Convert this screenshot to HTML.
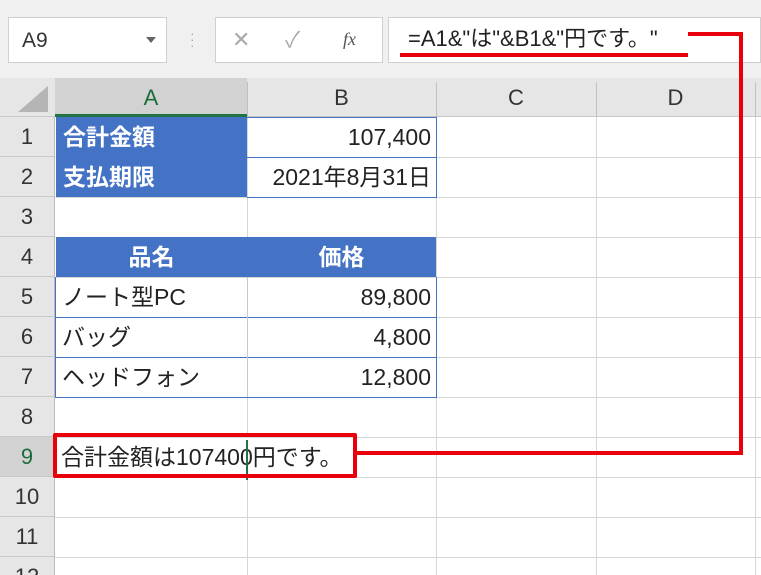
<!DOCTYPE html><html><head><meta charset="utf-8"><style>
*{margin:0;padding:0;box-sizing:border-box}
html,body{width:761px;height:575px;overflow:hidden}
body{background:#fff;position:relative;font-family:"Liberation Sans","Noto Sans CJK JP",sans-serif;color:#222}
div{position:absolute}
.t{font-size:23px;line-height:40px;white-space:nowrap}
.rh{left:0;width:55px;text-align:center;background:#e6e6e6;color:#333;font-size:22px;line-height:40px;border-bottom:1px solid #c8c8c8;border-right:1px solid #bbb}
.hl{left:55px;width:706px;height:1px;background:#d6d6d6}
.vl{width:1px;height:460px;background:#d6d6d6}
.blue{background:#4472c4;color:#fff;font-weight:bold}
</style></head><body>
<div style="left:0;top:0;width:761px;height:78px;background:#f0f0f0"></div>
<div style="left:8px;top:17px;width:159px;height:46px;background:#fff;border:1px solid #d0d0d0"></div>
<div class="t" style="left:22px;top:21px;font-size:21px;color:#333">A9</div>
<div style="left:146px;top:37px;width:0;height:0;border-left:5px solid transparent;border-right:5px solid transparent;border-top:6px solid #666"></div>
<div style="left:190px;top:30px;color:#aaa;font-size:14px;line-height:6px">·<br>·<br>·</div>
<div style="left:215px;top:17px;width:168px;height:46px;background:#fff;border:1px solid #d0d0d0"></div>
<div class="t" style="left:232px;top:20px;color:#aaa;font-size:22px">✕</div>
<div class="t" style="left:285px;top:20px;color:#aaa;font-size:22px">✓</div>
<div class="t" style="left:343px;top:19px;color:#555;font-size:18px;font-style:italic;font-family:'Liberation Serif',serif">fx</div>
<div style="left:388px;top:17px;width:373px;height:46px;background:#fff;border:1px solid #d0d0d0"></div>
<div class="t" style="left:408px;top:19px;color:#222;font-size:22px">=A1&amp;"は"&amp;B1&amp;"円です。"</div>
<div style="left:0;top:78px;width:761px;height:39px;background:#e6e6e6;border-bottom:1px solid #c8c8c8"></div>
<div style="left:18px;top:86px;width:0;height:0;border-left:30px solid transparent;border-bottom:26px solid #b5b5b5"></div>
<div style="left:55px;top:78px;width:192px;height:39px;background:#d2d2d2;border-bottom:3px solid #217346"></div>
<div class="t" style="left:55px;top:78px;width:192px;text-align:center;color:#1e6b3c;font-size:22px">A</div>
<div class="t" style="left:247px;top:78px;width:189px;text-align:center;color:#333;font-size:22px">B</div>
<div class="t" style="left:436px;top:78px;width:160px;text-align:center;color:#333;font-size:22px">C</div>
<div class="t" style="left:596px;top:78px;width:159px;text-align:center;color:#333;font-size:22px">D</div>
<div style="left:247px;top:82px;width:1px;height:35px;background:#c0c0c0"></div>
<div style="left:436px;top:82px;width:1px;height:35px;background:#c0c0c0"></div>
<div style="left:596px;top:82px;width:1px;height:35px;background:#c0c0c0"></div>
<div style="left:755px;top:82px;width:1px;height:35px;background:#c0c0c0"></div>
<div class="vl" style="left:247px;top:117px"></div><div class="vl" style="left:436px;top:117px"></div><div class="vl" style="left:596px;top:117px"></div><div class="vl" style="left:755px;top:117px"></div>
<div class="hl" style="top:157px"></div><div class="hl" style="top:197px"></div><div class="hl" style="top:237px"></div><div class="hl" style="top:277px"></div><div class="hl" style="top:317px"></div><div class="hl" style="top:357px"></div><div class="hl" style="top:397px"></div><div class="hl" style="top:437px"></div><div class="hl" style="top:477px"></div><div class="hl" style="top:517px"></div><div class="hl" style="top:557px"></div>
<div class="rh" style="top:117px;height:40px">1</div><div class="rh" style="top:157px;height:40px">2</div><div class="rh" style="top:197px;height:40px">3</div><div class="rh" style="top:237px;height:40px">4</div><div class="rh" style="top:277px;height:40px">5</div><div class="rh" style="top:317px;height:40px">6</div><div class="rh" style="top:357px;height:40px">7</div><div class="rh" style="top:397px;height:40px">8</div><div class="rh" style="top:437px;height:40px;background:#d2d2d2;color:#1e6b3c">9</div><div class="rh" style="top:477px;height:40px">10</div><div class="rh" style="top:517px;height:40px">11</div><div class="rh" style="top:557px;height:40px">12</div>
<div class="blue t" style="left:56px;top:117px;width:191px;height:80px;padding-left:7px;line-height:40px">合計金額<br>支払期限</div>
<div style="left:247px;top:117px;width:190px;height:81px;border:1px solid #4472c4;border-left:none"></div>
<div style="left:247px;top:157px;width:190px;height:1px;background:#4472c4"></div>
<div class="t" style="left:247px;top:117px;width:184px;text-align:right">107,400</div>
<div class="t" style="left:247px;top:157px;width:184px;text-align:right">2021年8月31日</div>
<div class="blue t" style="left:56px;top:237px;width:380px;height:40px"><span style="position:absolute;left:0;width:191px;text-align:center">品名</span><span style="position:absolute;left:191px;width:189px;text-align:center">価格</span></div>
<div style="left:55px;top:277px;width:382px;height:121px;border:1px solid #4472c4;border-top:none"></div>
<div style="left:55px;top:317px;width:382px;height:1px;background:#4472c4"></div>
<div style="left:55px;top:357px;width:382px;height:1px;background:#4472c4"></div>
<div style="left:247px;top:277px;width:1px;height:120px;background:#c8c8c8"></div>
<div class="t" style="left:62px;top:277px">ノート型PC</div>
<div class="t" style="left:62px;top:317px">バッグ</div>
<div class="t" style="left:62px;top:357px">ヘッドフォン</div>
<div class="t" style="left:247px;top:277px;width:184px;text-align:right">89,800</div>
<div class="t" style="left:247px;top:317px;width:184px;text-align:right">4,800</div>
<div class="t" style="left:247px;top:357px;width:184px;text-align:right">12,800</div>
<div style="left:56px;top:438px;width:300px;height:39px;background:#fff"></div>
<div class="t" style="left:61px;top:437px">合計金額は107400円です。</div>
<div style="left:246px;top:440px;width:2px;height:40px;background:#217346"></div>
<div style="left:53px;top:433px;width:304px;height:45px;border:4px solid #e8000b;border-radius:2px"></div>
<div style="left:400px;top:53px;width:288px;height:4px;background:#e8000b"></div>
<div style="left:688px;top:32px;width:55px;height:4px;background:#e8000b"></div>
<div style="left:739px;top:32px;width:4px;height:423px;background:#e8000b"></div>
<div style="left:355px;top:451px;width:388px;height:4px;background:#e8000b"></div>
</body></html>
